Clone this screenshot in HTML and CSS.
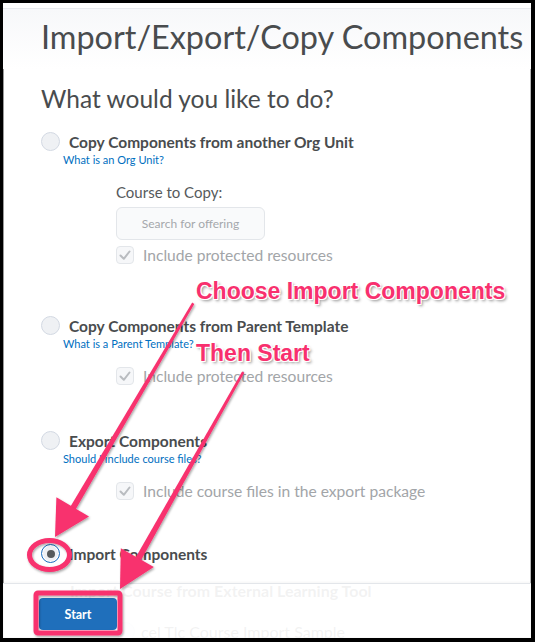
FILE: index.html
```html
<!DOCTYPE html>
<html lang="en">
<head>
<meta charset="utf-8">
<title>Import/Export/Copy Components</title>
<link rel="stylesheet" href="styles.css">
</head>
<body>
<div class="frame">
  <div class="top-strip"></div>
  <header class="page-header">
    <h1 class="title">Import/Export/Copy Components</h1>
  </header>
  <main class="content">
    <h2 class="question">What would you like to do?</h2>

    <section class="option opt-org">
      <div class="radio-row"><span class="radio"></span><span class="opt-label">Copy Components from another Org Unit</span></div>
      <a class="help" href="#">What is an Org Unit?</a>
      <div class="sub">
        <div class="field-label">Course to Copy:</div>
        <div class="search">Search for offering</div>
        <div class="check-row"><span class="checkbox"><svg viewBox="0 0 18 18" width="18" height="18"><polyline points="4.5,9.5 7.8,12.8 13.5,5.5" /></svg></span><span class="check-label">Include protected resources</span></div>
      </div>
    </section>

    <section class="option opt-parent">
      <div class="radio-row"><span class="radio"></span><span class="opt-label">Copy Components from Parent Template</span></div>
      <a class="help" href="#">What is a Parent Template?</a>
      <div class="sub sub-tight">
        <div class="check-row"><span class="checkbox"><svg viewBox="0 0 18 18" width="18" height="18"><polyline points="4.5,9.5 7.8,12.8 13.5,5.5" /></svg></span><span class="check-label">Include protected resources</span></div>
      </div>
    </section>

    <section class="option opt-export">
      <div class="radio-row"><span class="radio"></span><span class="opt-label">Export Components</span></div>
      <a class="help" href="#">Should I include course files?</a>
      <div class="sub sub-tight">
        <div class="check-row"><span class="checkbox"><svg viewBox="0 0 18 18" width="18" height="18"><polyline points="4.5,9.5 7.8,12.8 13.5,5.5" /></svg></span><span class="check-label">Include course files in the export package</span></div>
      </div>
    </section>

    <section class="option opt-import">
      <div class="radio-row"><span class="radio radio-on"><span class="dot"></span></span><span class="opt-label">Import Components</span></div>
      <div class="import-head">Import Course from External Learning Tool</div>
      <div class="sub-radio-row"><span class="radio"></span><span class="sub-radio-label">cel Tlc Course Import Sample</span></div>
    </section>
  </main>

  <footer class="footer">
    <button class="start" type="button">Start</button>
  </footer>

  <svg class="marks" viewBox="0 0 535 642" width="535" height="642" aria-hidden="true">
    <defs>
      <filter id="sh" x="-20%" y="-20%" width="140%" height="140%">
        <feDropShadow dx="1" dy="1.5" stdDeviation="1.2" flood-color="#000" flood-opacity="0.35"/>
      </filter>
    </defs>
    <g fill="#f8306e" filter="url(#sh)">
      <polygon points="192.2,302.6 194.3,303.9 75.0,510.5 69.9,507.5" />
      <polygon points="55,537 56.4,497.3 89,516.5" />
      <polygon points="242.1,371.5 244.3,372.7 140.0,562.0 134.8,559.0" />
      <polygon points="120,589 120.8,548.2 153.8,567" />
    </g>
    <g fill="none" stroke="#f8306e" filter="url(#sh)">
      <ellipse cx="49.5" cy="555" rx="20" ry="14.5" stroke-width="5" />
      <rect x="36" y="593" width="84" height="40" rx="2" stroke-width="5" />
    </g>
  </svg>
  <div class="callout callout-choose">Choose Import Components</div>
  <div class="callout callout-start">Then Start</div>
</div>
</body>
</html>
```

FILE: styles.css
```css
* { box-sizing: border-box; }

html, body {
  margin: 0;
  padding: 0;
  background: #fff;
}

body {
  font-family: Lato, "Open Sans", "Liberation Sans", sans-serif;
  color: #494c4e;
}

.frame {
  position: relative;
  width: 535px;
  height: 642px;
  overflow: hidden;
  border-style: solid;
  border-color: #000;
  border-width: 3px 4px 4px 3px;
  background: #fff;
  box-shadow: inset 1px 1px 0 #9a9a9a, inset -1px -1px 0 #b5b5b5;
}

.top-strip {
  height: 6px;
  background: #fff;
  border-bottom: 1px solid #e8eaee;
}

.page-header {
  padding: 8px 0 12px 38px;
  background: linear-gradient(#f7f8fa, #ffffff);
}

.title {
  margin: 0;
  font-size: 32.4px;
  line-height: 40px;
  font-weight: 400;
  color: #494c4e;
  white-space: nowrap;
}

.content {
  padding: 15px 0 0 38px;
}

.question {
  margin: 0 0 18px 0;
  font-size: 24.5px;
  line-height: 30px;
  font-weight: 400;
  color: #494c4e;
}

.radio-row {
  display: flex;
  align-items: flex-start;
  gap: 9px;
}

.radio {
  flex: none;
  width: 19px;
  height: 19px;
  border-radius: 50%;
  background: #eff1f4;
  border: 1px solid #d3d9e3;
}

.radio-on {
  display: flex;
  align-items: center;
  justify-content: center;
  border-color: #1a6ec0;
  background: #eef0f3;
  box-shadow: inset 0 0 0 1px #fff;
}

.dot {
  width: 8px;
  height: 8px;
  border-radius: 50%;
  background: #565a5c;
}

.opt-label {
  font-size: 15.5px;
  line-height: 20px;
  font-weight: 700;
  color: #494c4e;
}

.help {
  display: block;
  margin-left: 22px;
  font-size: 11px;
  line-height: 16px;
  color: #006fbf;
  text-decoration: none;
}

.sub {
  margin-left: 75px;
  padding-top: 14px;
}

.sub-tight {
  padding-top: 14px;
}

.field-label {
  font-size: 15px;
  line-height: 20px;
  color: #565a5c;
}

.search {
  margin-top: 5px;
  width: 149px;
  height: 33px;
  border: 1px solid #e3e6ea;
  border-radius: 6px;
  background: #f9fafb;
  color: #a5a8ac;
  font-size: 12px;
  line-height: 31px;
  text-align: center;
}

.check-row {
  margin-top: 5px;
  display: flex;
  align-items: center;
  gap: 9px;
}

.sub-tight .check-row { margin-top: 0; }

.checkbox {
  flex: none;
  width: 18px;
  height: 18px;
  border-radius: 4px;
  border: 1px solid #e3e6ea;
  background: #f6f7f9;
  display: flex;
}

.checkbox svg {
  margin: -1px;
}

.checkbox polyline {
  fill: none;
  stroke: #b9bcc0;
  stroke-width: 2;
  stroke-linecap: round;
  stroke-linejoin: round;
}

.check-label {
  font-size: 15.6px;
  line-height: 20px;
  color: #a2a5a8;
}

.opt-parent { margin-top: 51px; }
.opt-export { margin-top: 45px; }
.opt-import { margin-top: 43px; }

.import-head {
  margin: 17px 0 0 29px;
  font-size: 16px;
  line-height: 20px;
  font-weight: 700;
  color: #494c4e;
}

.sub-radio-row {
  margin: 21px 0 0 75px;
  display: flex;
  gap: 6px;
  align-items: flex-start;
}

.sub-radio-label {
  font-size: 16px;
  line-height: 20px;
  color: #494c4e;
}

.footer {
  position: absolute;
  left: 0;
  right: 0;
  top: 580px;
  bottom: 0;
  padding: 14px 0 0 36px;
  background: rgba(255, 255, 255, 0.93);
  border-top: 1px solid #e3e6ea;
  box-shadow: 0 -1px 2px rgba(0, 0, 0, 0.04);
}

.start {
  width: 78px;
  height: 32px;
  border: none;
  border-radius: 4px;
  background: #1f6fbb;
  color: #fff;
  font-family: Lato, "Liberation Sans", sans-serif;
  font-weight: 700;
  font-size: 12.5px;
  padding: 0;
}

.marks {
  position: absolute;
  left: -3px;
  top: -3px;
  pointer-events: none;
}

.callout {
  position: absolute;
  left: 193px;
  font-family: "Liberation Sans", Arial, sans-serif;
  font-weight: 700;
  font-size: 23px;
  line-height: 23px;
  color: #f8306e;
  white-space: nowrap;
  text-shadow: 0 0 1px #fff, 1px 1px 0 #fff, -1px -1px 0 #fff, 1px -1px 0 #fff, -1px 1px 0 #fff, 2px 2px 3px rgba(0, 0, 0, 0.45);
}

.callout-choose { top: 277px; }
.callout-start { top: 339px; }
```
